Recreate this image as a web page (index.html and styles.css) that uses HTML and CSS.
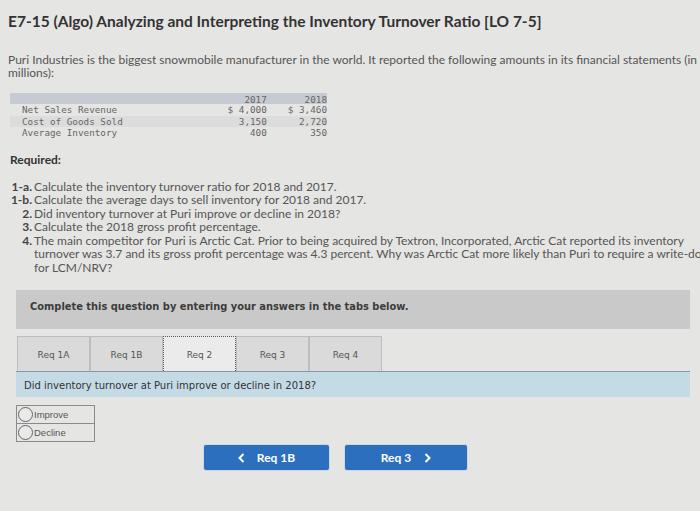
FILE: index.html
```html
<!DOCTYPE html>
<html>
<head>
<meta charset="utf-8">
<link rel="stylesheet" href="styles.css">
</head>
<body>
<h1 class="title">E7-15 (Algo) Analyzing and Interpreting the Inventory Turnover Ratio [LO 7-5]</h1>
<p class="intro">Puri Industries is the biggest snowmobile manufacturer in the world. It reported the following amounts in its financial statements (in millions):</p>

<div class="data">
  <div class="drow dhead"><span class="lbl"></span><span class="num">2017</span><span class="num">2018</span></div>
  <div class="drow"><span class="lbl">Net Sales Revenue</span><span class="num">$ 4,000</span><span class="num">$ 3,460</span></div>
  <div class="drow alt"><span class="lbl">Cost of Goods Sold</span><span class="num">3,150</span><span class="num">2,720</span></div>
  <div class="drow"><span class="lbl">Average Inventory</span><span class="num">400</span><span class="num">350</span></div>
</div>

<h2 class="req">Required:</h2>
<div class="list">
  <span class="n">1-a.</span><span>Calculate the inventory turnover ratio for 2018 and 2017.</span>
  <span class="n">1-b.</span><span>Calculate the average days to sell inventory for 2018 and 2017.</span>
  <span class="n">2.</span><span>Did inventory turnover at Puri improve or decline in 2018?</span>
  <span class="n">3.</span><span>Calculate the 2018 gross profit percentage.</span>
  <span class="n">4.</span><span>The main competitor for Puri is Arctic Cat. Prior to being acquired by Textron, Incorporated, Arctic Cat reported its inventory turnover was 3.7 and its gross profit percentage was 4.3 percent. Why was Arctic Cat more likely than Puri to require a write-down for LCM/NRV?</span>
</div>

<div class="banner">Complete this question by entering your answers in the tabs below.</div>

<div class="tabs">
  <div class="tab">Req 1A</div>
  <div class="tab">Req 1B</div>
  <div class="tab active">Req 2</div>
  <div class="tab">Req 3</div>
  <div class="tab">Req 4</div>
</div>
<div class="qbar">Did inventory turnover at Puri improve or decline in 2018?</div>

<div class="choices">
  <div class="choice"><span class="radio"></span>Improve</div>
  <div class="choice"><span class="radio"></span>Decline</div>
</div>

<div class="navs">
  <div class="btn"><svg class="chev" width="7" height="10" viewBox="0 0 7 10"><polyline points="5.5,1 1.5,5 5.5,9" fill="none" stroke="#fff" stroke-width="2"/></svg>Req 1B</div>
  <div class="btn">Req 3<svg class="chev right" width="7" height="10" viewBox="0 0 7 10"><polyline points="1.5,1 5.5,5 1.5,9" fill="none" stroke="#fff" stroke-width="2"/></svg></div>
</div>
</body>
</html>
```
FILE: styles.css
```css
html, body {
  margin: 0;
  padding: 0;
  background: #e5e5e3;
  overflow: hidden;
}
body {
  width: 700px;
  height: 511px;
  font-family: Lato, "Open Sans", sans-serif;
  color: #555;
}
.title {
  margin: 12px 0 0 8px;
  font-size: 15.5px;
  line-height: 18px;
  font-weight: 700;
  color: #333;
  white-space: nowrap;
}
.intro {
  margin: 23px 0 0 8px;
  width: 705px;
  font-size: 12px;
  line-height: 13px;
  color: #555;
}
.data {
  margin: 14px 0 0 10px;
  width: 317px;
  font-family: "DejaVu Sans Mono", "Liberation Mono", monospace;
  font-size: 9.3px;
  color: #666;
}
.drow {
  display: flex;
  height: 11.5px;
  line-height: 11.5px;
}
.dhead { background: #c6cad2; height: 11px; line-height: 13px; }
.alt { background: #dcdcdc; }
.lbl { width: 190px; padding-left: 12px; }
.num { text-align: right; }
.num:nth-child(2) { width: 58px; }
.num:nth-child(3) { width: 61px; }
.req {
  margin: 14px 0 0 10px;
  font-size: 12px;
  line-height: 14px;
  font-weight: 700;
  color: #333;
}
.list {
  margin: 13px 0 0 10px;
  display: grid;
  grid-template-columns: 22px 690px;
  column-gap: 2px;
  font-size: 12px;
  line-height: 13.5px;
  color: #555;
}
.list .n {
  text-align: right;
  font-weight: 700;
  color: #444;
}
.banner {
  margin: 16px 0 0 16px;
  width: 660px;
  height: 39px;
  padding-left: 14px;
  background: #c9c9c9;
  font-family: "DejaVu Sans", Verdana, sans-serif;
  font-size: 9.9px;
  font-weight: 700;
  line-height: 33px;
  color: #3c3c3c;
}
.tabs {
  margin: 7px 0 0 17px;
  display: flex;
}
.tab {
  width: 71px;
  height: 34px;
  border: 1px solid #bdbdbd;
  border-bottom: none;
  background: #dadada;
  font-family: "DejaVu Sans", Verdana, sans-serif;
  font-size: 9px;
  line-height: 36px;
  text-align: center;
  color: #555;
}
.tab.active {
  background: #ebebeb;
  border: 1px dotted #555;
  border-bottom: none;
}
.qbar {
  margin-left: 16px;
  width: 666px;
  height: 25px;
  padding-left: 8px;
  border-top: 1px solid #8797a3;
  background: #c4dbe6;
  font-family: "DejaVu Sans", Verdana, sans-serif;
  font-size: 10px;
  line-height: 28px;
  color: #333;
}
.choices {
  margin: 8px 0 0 16px;
  width: 77px;
  border: 1px solid #8a8a8a;
}
.choice {
  height: 17px;
  display: flex;
  align-items: center;
  font-family: "Liberation Sans", Arial, sans-serif;
  font-size: 9.5px;
  color: #555;
}
.choice + .choice { border-top: 1px solid #8a8a8a; }
.radio {
  width: 13px;
  height: 13px;
  border: 1px solid #666;
  border-radius: 50%;
  margin: 0 1px 0 1px;
  background: #eaeaea;
}
.navs {
  margin: 3px 0 0 204px;
  display: flex;
  gap: 16px;
}
.btn {
  width: 125px;
  height: 25px;
  background: #2b6fbe;
  border-radius: 2px;
  color: #fff;
  font-family: Lato, "Open Sans", sans-serif;
  font-weight: 700;
  font-size: 12px;
  display: flex;
  align-items: center;
  justify-content: center;
  box-shadow: 0 0 0 1px #cfd7e2;
}
.btn + .btn { width: 122px; }
.chev { margin-right: 12px; }
.chev.right { margin: 0 0 0 13px; }
```
